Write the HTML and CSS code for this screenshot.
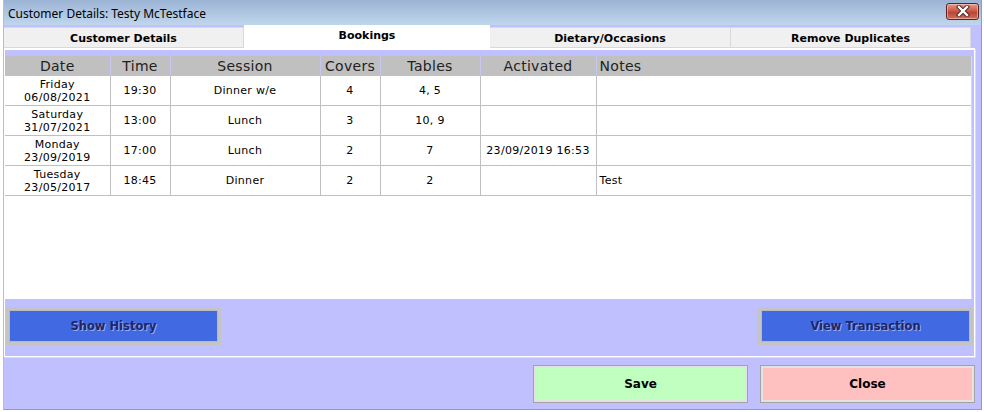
FILE: index.html
```html
<!DOCTYPE html>
<html lang="en">
<head>
    <meta charset="UTF-8">
    <title>Customer Details</title>
    <link rel="stylesheet" href="styles.css">
</head>
<body>
    <div class="window">
        <div class="titlebar">
            <span class="title">Customer Details: Testy McTestface</span>
            <button class="close-x" aria-label="Close">
                <svg width="18" height="12" viewBox="0 0 18 12">
                    <path d="M5 2 L13 10 M13 2 L5 10" stroke="#4a2020" stroke-width="4.2" stroke-linecap="square"/>
                    <path d="M5 2 L13 10 M13 2 L5 10" stroke="#ffffff" stroke-width="2.4" stroke-linecap="square"/>
                </svg>
            </button>
        </div>

        <div class="tabs">
            <div class="tab">Customer Details</div>
            <div class="tab active">Bookings</div>
            <div class="tab wide">Dietary/Occasions</div>
            <div class="tab">Remove Duplicates</div>
        </div>

        <div class="panel">
            <div class="grid-wrap">
                <table class="grid">
                    <colgroup>
                        <col style="width: 105px">
                        <col style="width: 60px">
                        <col style="width: 150px">
                        <col style="width: 60px">
                        <col style="width: 100px">
                        <col style="width: 116px">
                        <col>
                    </colgroup>
                    <thead>
                        <tr>
                            <th>Date</th>
                            <th>Time</th>
                            <th>Session</th>
                            <th>Covers</th>
                            <th>Tables</th>
                            <th>Activated</th>
                            <th class="left">Notes</th>
                        </tr>
                    </thead>
                    <tbody>
                        <tr>
                            <td>Friday<br>06/08/2021</td>
                            <td>19:30</td>
                            <td>Dinner w/e</td>
                            <td>4</td>
                            <td>4, 5</td>
                            <td></td>
                            <td class="left"></td>
                        </tr>
                        <tr>
                            <td>Saturday<br>31/07/2021</td>
                            <td>13:00</td>
                            <td>Lunch</td>
                            <td>3</td>
                            <td>10, 9</td>
                            <td></td>
                            <td class="left"></td>
                        </tr>
                        <tr>
                            <td>Monday<br>23/09/2019</td>
                            <td>17:00</td>
                            <td>Lunch</td>
                            <td>2</td>
                            <td>7</td>
                            <td>23/09/2019 16:53</td>
                            <td class="left"></td>
                        </tr>
                        <tr>
                            <td>Tuesday<br>23/05/2017</td>
                            <td>18:45</td>
                            <td>Dinner</td>
                            <td>2</td>
                            <td>2</td>
                            <td></td>
                            <td class="left">Test</td>
                        </tr>
                    </tbody>
                </table>
            </div>

            <div class="panel-buttons">
                <button class="btn blue">Show History</button>
                <button class="btn blue">View Transaction</button>
            </div>
        </div>

        <div class="footer">
            <button class="btn save">Save</button>
            <button class="btn cancel">Close</button>
        </div>
    </div>
</body>
</html>
```

FILE: styles.css
```css
body {
    margin: 0;
    background: #ffffff;
    font-family: "DejaVu Sans", sans-serif;
}

.window {
    margin-left: 3px;
    width: 977px;
    height: 409px;
    background: #c0c0ff;
    border-left: 1px solid #a9c3de;
    border-right: 1px solid #26c8e6;
    border-bottom: 1px solid #26c8e6;
    display: flex;
    flex-direction: column;
}

/* window title bar */
.titlebar {
    height: 25px;
    flex: none;
    display: flex;
    align-items: center;
    justify-content: space-between;
    padding: 0 2px 0 4px;
    background: linear-gradient(#9cb4d4, #bfd6ec);
}

.title {
    font-family: "Noto Sans", sans-serif;
    font-size: 12px;
    color: #000;
    margin-top: 1px;
}

.close-x {
    width: 33px;
    height: 17px;
    margin-top: -3px;
    padding: 0;
    border: 1px solid #5a2323;
    border-radius: 3px;
    background: linear-gradient(#e59a8e, #c9533f 50%, #b8402c 51%, #d0705a);
    box-shadow: inset 0 0 0 1px rgba(255, 220, 210, 0.5);
    display: flex;
    align-items: center;
    justify-content: center;
}

/* tab strip */
.tabs {
    height: 23px;
    flex: none;
    display: flex;
    align-items: flex-end;
    width: 969px;
}

.tab {
    width: 240px;
    height: 21px;
    box-sizing: border-box;
    padding-top: 2px;
    background: #f0f0f0;
    border: 1px solid #d9d9d9;
    border-left: none;
    font-weight: bold;
    font-size: 11px;
    color: #000;
    display: flex;
    align-items: center;
    justify-content: center;
}

.tab.wide {
    width: 241px;
}

.tab.active {
    width: 246px;
    height: 23px;
    background: #ffffff;
    border: none;
    padding: 0 0 2px;
}

/* page of the active tab */
.panel {
    width: 971px;
    height: 309px;
    box-sizing: border-box;
    flex: none;
    border: 1px solid #ffffff;
    border-top-width: 2px;
    box-shadow: 1px 1px 0 #dedede;
    padding-top: 6px;
    display: flex;
    flex-direction: column;
}

.grid-wrap {
    height: 243px;
    flex: none;
    background: #ffffff;
    border-right: 1px solid #dcdcdc;
    width: 966px;
}

.grid {
    table-layout: fixed;
    width: 966px;
    border-collapse: collapse;
    font-family: "DejaVu Sans", sans-serif;
}

.grid th {
    height: 20px;
    padding: 0;
    background: #c0c0c0;
    border-left: 1px solid #c6c6f2;
    font-weight: normal;
    font-size: 14px;
    letter-spacing: 0.3px;
    color: #222;
    text-align: center;
}

.grid th:first-child {
    border-left: none;
}

.grid td {
    height: 29px;
    padding: 0;
    border-left: 1px solid #c0c0c0;
    border-bottom: 1px solid #c0c0c0;
    font-size: 11px;
    line-height: 13px;
    letter-spacing: 0.3px;
    color: #000;
    text-align: center;
}

.grid td:first-child {
    border-left: none;
}

.grid .left {
    text-align: left;
    padding-left: 3px;
}

.panel-buttons {
    flex: 1;
    display: flex;
    justify-content: space-between;
    align-items: flex-start;
    padding: 8px 1px 0 1px;
}

/* buttons */
.btn {
    width: 215px;
    height: 38px;
    box-sizing: border-box;
    font-family: "DejaVu Sans", sans-serif;
    font-weight: bold;
    font-size: 11.5px;
    cursor: pointer;
}

.btn.blue {
    background: #4169e1;
    border: 3px solid #c4c4c4;
    box-shadow: inset 0 0 0 1px #b8b8c8;
    color: #1f2766;
    text-shadow: 1px 1px 0 rgba(170, 185, 245, 0.8);
}

.footer {
    flex: 1;
    display: flex;
    justify-content: flex-end;
    align-items: flex-start;
    gap: 12px;
    padding: 8px 6px 0 0;
}

.btn.save,
.btn.cancel {
    font-size: 12px;
    color: #000;
    border: 1px solid #a3a3a3;
    box-shadow: inset 0 0 0 2px #e2e2e2;
}

.btn.save {
    background: #c0ffc0;
}

.btn.cancel {
    background: #ffc0c0;
}
```
